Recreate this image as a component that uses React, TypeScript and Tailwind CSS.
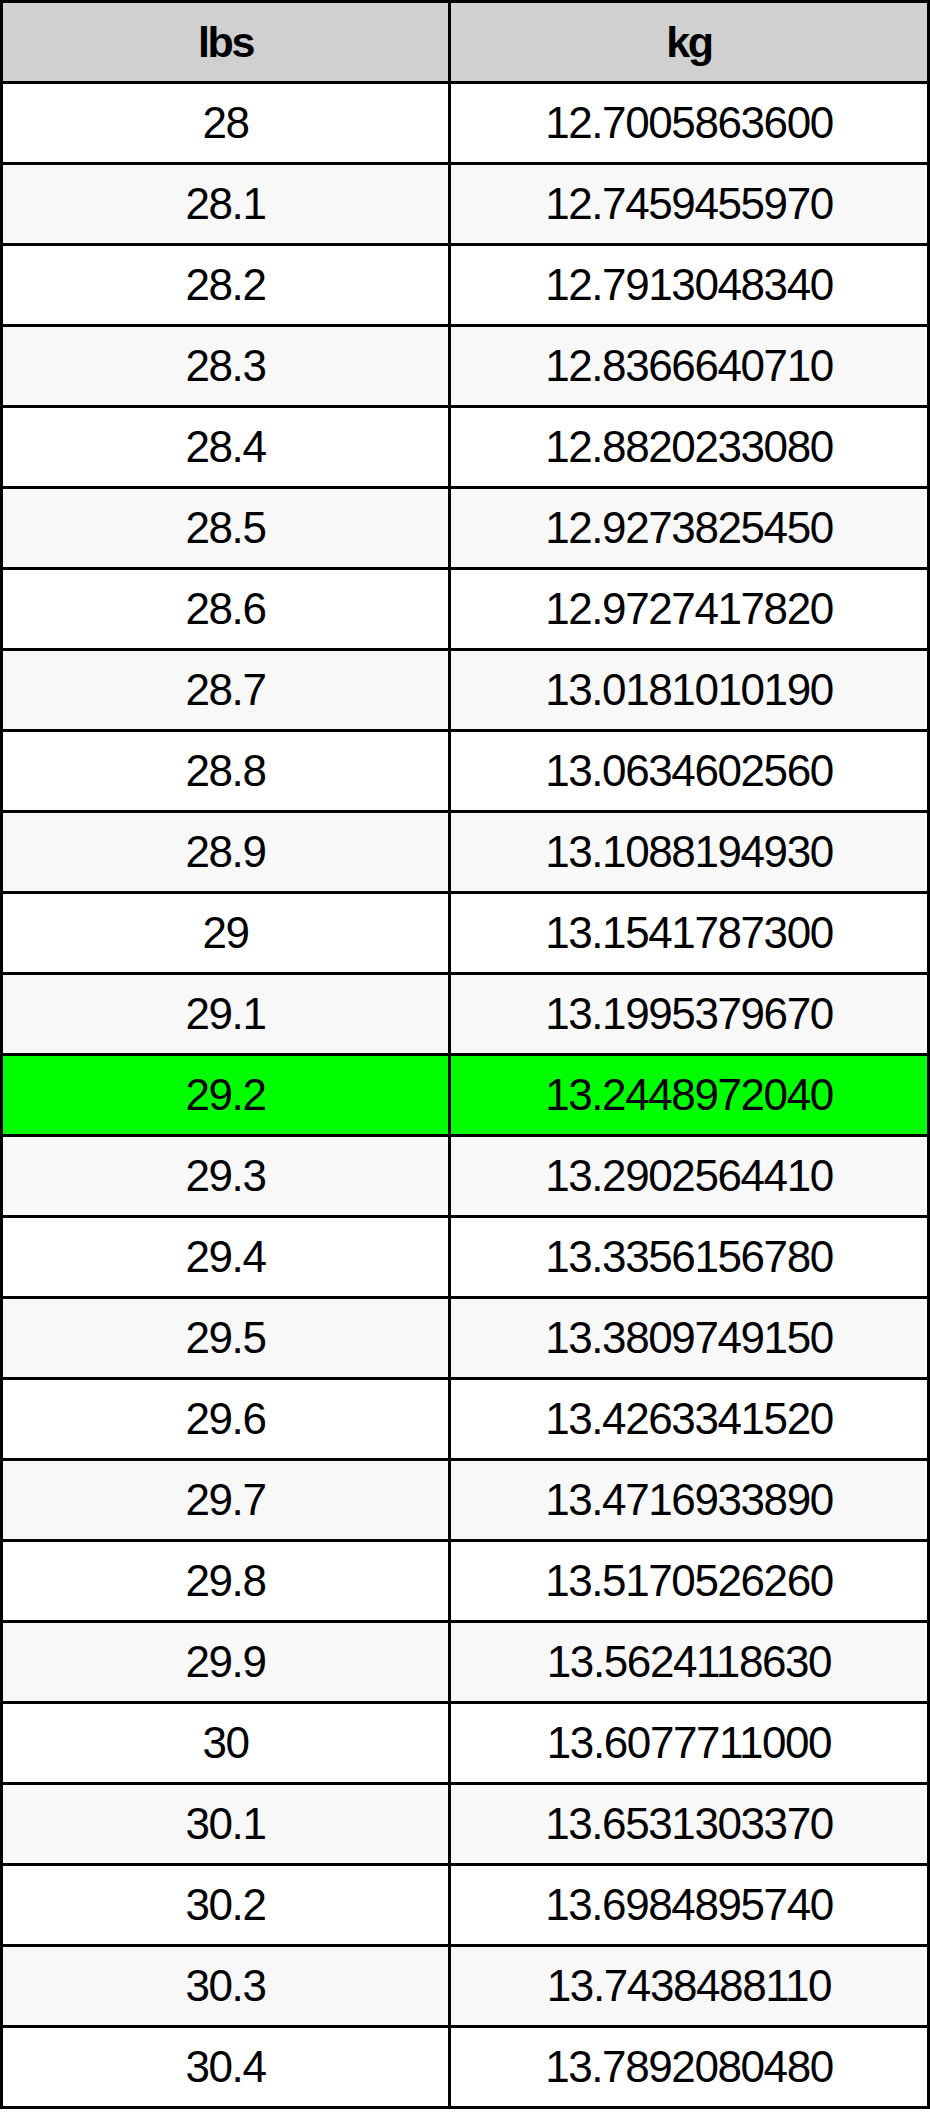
import React from 'react';

const rows: [string, string][] = [
    ["28", "12.7005863600"],
    ["28.1", "12.7459455970"],
    ["28.2", "12.7913048340"],
    ["28.3", "12.8366640710"],
    ["28.4", "12.8820233080"],
    ["28.5", "12.9273825450"],
    ["28.6", "12.9727417820"],
    ["28.7", "13.0181010190"],
    ["28.8", "13.0634602560"],
    ["28.9", "13.1088194930"],
    ["29", "13.1541787300"],
    ["29.1", "13.1995379670"],
    ["29.2", "13.2448972040"],
    ["29.3", "13.2902564410"],
    ["29.4", "13.3356156780"],
    ["29.5", "13.3809749150"],
    ["29.6", "13.4263341520"],
    ["29.7", "13.4716933890"],
    ["29.8", "13.5170526260"],
    ["29.9", "13.5624118630"],
    ["30", "13.6077711000"],
    ["30.1", "13.6531303370"],
    ["30.2", "13.6984895740"],
    ["30.3", "13.7438488110"],
    ["30.4", "13.7892080480"],
];

const highlight = "29.2";

const App: React.FC = () => {
    return (
        <div className="w-[930px] min-h-[2115px] bg-white font-['Liberation_Sans',Arial,sans-serif] text-black">
            <div className="border-[3px] border-black">
                {/* header */}
                <div className="flex h-[78px] bg-[#d0d0d0] text-[43px] font-bold tracking-[-2.4px]">
                    <div className="w-[448px] border-r-[3px] border-black flex items-center justify-center">lbs</div>
                    <div className="flex-1 flex items-center justify-center">kg</div>
                </div>

                {rows.map(([lbs, kg], i) => {
                    const bg = lbs === highlight ? 'bg-[#00ff00]' : i % 2 === 1 ? 'bg-[#f8f8f8]' : 'bg-white';
                    return (
                        <div key={lbs} className={`flex h-[81px] border-t-[3px] border-black text-[44px] tracking-[-1.4px] ${bg}`}>
                            <div className="w-[448px] border-r-[3px] border-black flex items-center justify-center">{lbs}</div>
                            <div className="flex-1 flex items-center justify-center">{kg}</div>
                        </div>
                    );
                })}
            </div>
        </div>
    );
};

export default App;
